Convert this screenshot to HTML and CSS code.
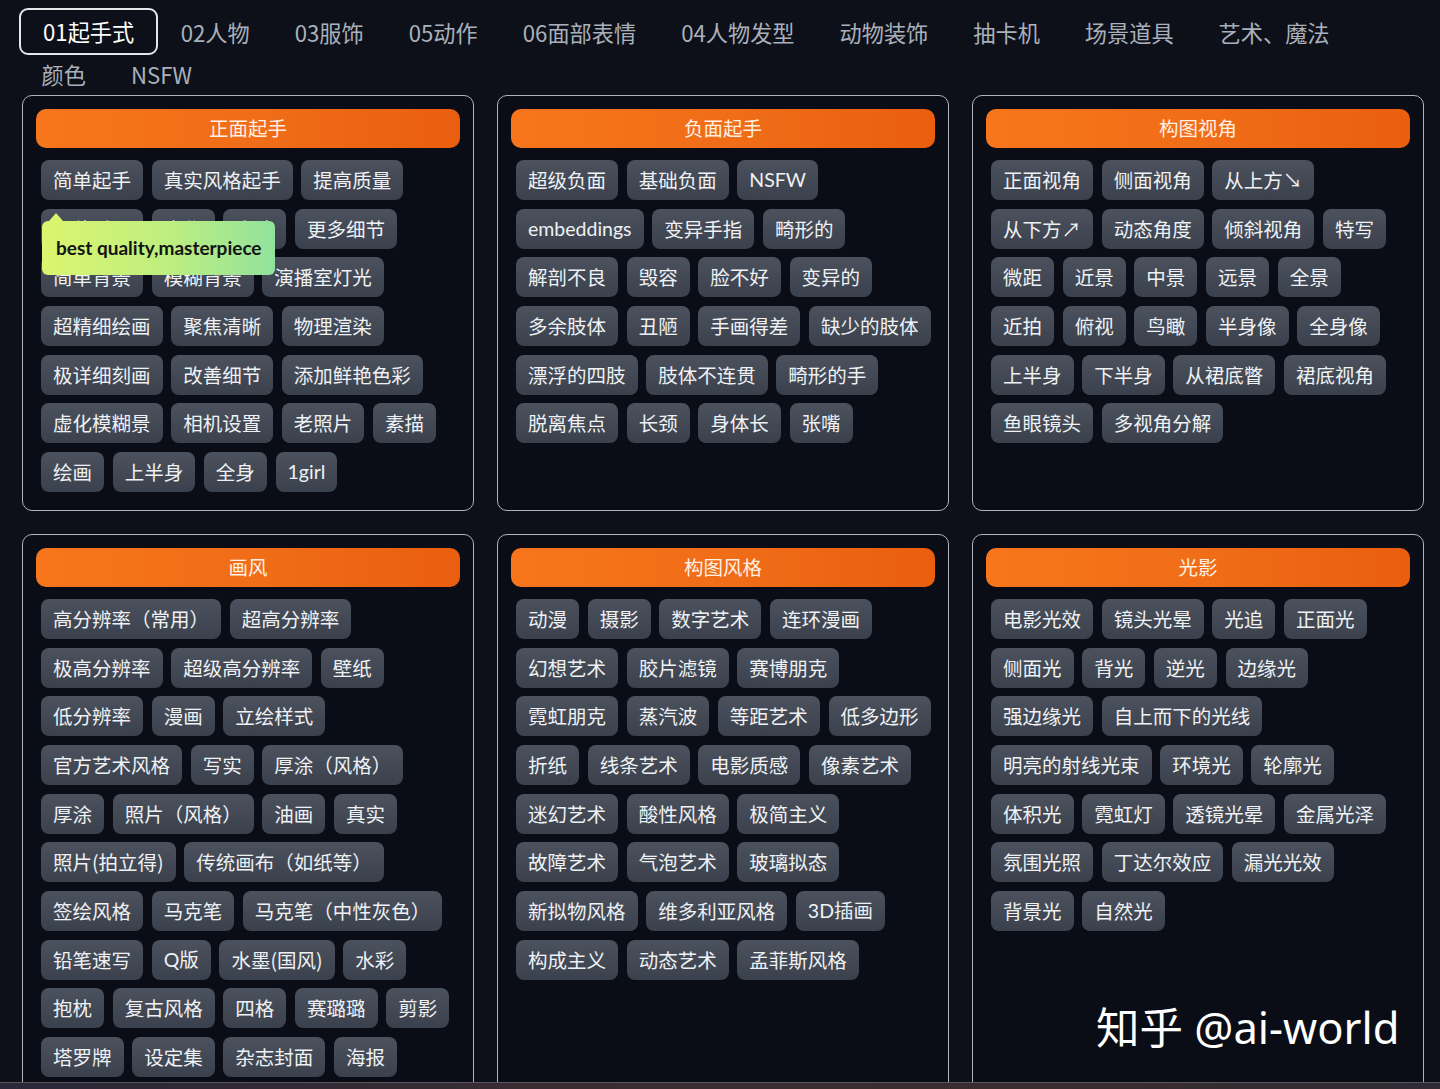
FILE: index.html
```html
<!DOCTYPE html>
<html lang="zh-CN">
<head>
<meta charset="utf-8">
<title>Prompt</title>
<link rel="stylesheet" href="styles.css">
</head>
<body>
<nav class="tabs">
  <button class="tab selected">01起手式</button>
  <button class="tab">02人物</button>
  <button class="tab">03服饰</button>
  <button class="tab">05动作</button>
  <button class="tab">06面部表情</button>
  <button class="tab">04人物发型</button>
  <button class="tab">动物装饰</button>
  <button class="tab">抽卡机</button>
  <button class="tab">场景道具</button>
  <button class="tab">艺术、魔法</button>
  <button class="tab">颜色</button>
  <button class="tab">NSFW</button>
</nav>

<main class="grid">
  <section class="card">
    <div class="head">正面起手</div>
    <div class="chips">
      <span class="chip">简单起手</span><span class="chip">真实风格起手</span><span class="chip">提高质量</span>
      <span class="chip">最佳质量</span><span class="chip">杰作</span><span class="chip">高清</span><span class="chip">更多细节</span>
      <span class="chip">简单背景</span><span class="chip">模糊背景</span><span class="chip">演播室灯光</span>
      <span class="chip">超精细绘画</span><span class="chip">聚焦清晰</span><span class="chip">物理渲染</span>
      <span class="chip">极详细刻画</span><span class="chip">改善细节</span><span class="chip">添加鲜艳色彩</span>
      <span class="chip">虚化模糊景</span><span class="chip">相机设置</span><span class="chip">老照片</span><span class="chip">素描</span>
      <span class="chip">绘画</span><span class="chip">上半身</span><span class="chip">全身</span><span class="chip latin">1girl</span>
    </div>
    <div class="tooltip">best quality,masterpiece</div>
  </section>

  <section class="card">
    <div class="head">负面起手</div>
    <div class="chips">
      <span class="chip">超级负面</span><span class="chip">基础负面</span><span class="chip latin">NSFW</span>
      <span class="chip latin">embeddings</span><span class="chip">变异手指</span><span class="chip">畸形的</span>
      <span class="chip">解剖不良</span><span class="chip">毁容</span><span class="chip">脸不好</span><span class="chip">变异的</span>
      <span class="chip">多余肢体</span><span class="chip">丑陋</span><span class="chip">手画得差</span><span class="chip">缺少的肢体</span>
      <span class="chip">漂浮的四肢</span><span class="chip">肢体不连贯</span><span class="chip">畸形的手</span>
      <span class="chip">脱离焦点</span><span class="chip">长颈</span><span class="chip">身体长</span><span class="chip">张嘴</span>
    </div>
  </section>

  <section class="card">
    <div class="head">构图视角</div>
    <div class="chips">
      <span class="chip">正面视角</span><span class="chip">侧面视角</span><span class="chip">从上方↘</span>
      <span class="chip">从下方↗</span><span class="chip">动态角度</span><span class="chip">倾斜视角</span><span class="chip">特写</span>
      <span class="chip">微距</span><span class="chip">近景</span><span class="chip">中景</span><span class="chip">远景</span><span class="chip">全景</span>
      <span class="chip">近拍</span><span class="chip">俯视</span><span class="chip">鸟瞰</span><span class="chip">半身像</span><span class="chip">全身像</span>
      <span class="chip">上半身</span><span class="chip">下半身</span><span class="chip">从裙底瞥</span><span class="chip">裙底视角</span>
      <span class="chip">鱼眼镜头</span><span class="chip">多视角分解</span>
    </div>
  </section>

  <section class="card">
    <div class="head">画风</div>
    <div class="chips">
      <span class="chip">高分辨率（常用）</span><span class="chip">超高分辨率</span>
      <span class="chip">极高分辨率</span><span class="chip">超级高分辨率</span><span class="chip">壁纸</span>
      <span class="chip">低分辨率</span><span class="chip">漫画</span><span class="chip">立绘样式</span>
      <span class="chip">官方艺术风格</span><span class="chip">写实</span><span class="chip">厚涂（风格）</span>
      <span class="chip">厚涂</span><span class="chip">照片（风格）</span><span class="chip">油画</span><span class="chip">真实</span>
      <span class="chip">照片(拍立得)</span><span class="chip">传统画布（如纸等）</span>
      <span class="chip">签绘风格</span><span class="chip">马克笔</span><span class="chip">马克笔（中性灰色）</span>
      <span class="chip">铅笔速写</span><span class="chip latin">Q版</span><span class="chip">水墨(国风)</span><span class="chip">水彩</span>
      <span class="chip">抱枕</span><span class="chip">复古风格</span><span class="chip">四格</span><span class="chip">赛璐璐</span><span class="chip">剪影</span>
      <span class="chip">塔罗牌</span><span class="chip">设定集</span><span class="chip">杂志封面</span><span class="chip">海报</span>
    </div>
  </section>

  <section class="card">
    <div class="head">构图风格</div>
    <div class="chips">
      <span class="chip">动漫</span><span class="chip">摄影</span><span class="chip">数字艺术</span><span class="chip">连环漫画</span>
      <span class="chip">幻想艺术</span><span class="chip">胶片滤镜</span><span class="chip">赛博朋克</span>
      <span class="chip">霓虹朋克</span><span class="chip">蒸汽波</span><span class="chip">等距艺术</span><span class="chip">低多边形</span>
      <span class="chip">折纸</span><span class="chip">线条艺术</span><span class="chip">电影质感</span><span class="chip">像素艺术</span>
      <span class="chip">迷幻艺术</span><span class="chip">酸性风格</span><span class="chip">极简主义</span>
      <span class="chip">故障艺术</span><span class="chip">气泡艺术</span><span class="chip">玻璃拟态</span>
      <span class="chip">新拟物风格</span><span class="chip">维多利亚风格</span><span class="chip latin">3D插画</span>
      <span class="chip">构成主义</span><span class="chip">动态艺术</span><span class="chip">孟菲斯风格</span>
    </div>
  </section>

  <section class="card">
    <div class="head">光影</div>
    <div class="chips">
      <span class="chip">电影光效</span><span class="chip">镜头光晕</span><span class="chip">光追</span><span class="chip">正面光</span>
      <span class="chip">侧面光</span><span class="chip">背光</span><span class="chip">逆光</span><span class="chip">边缘光</span>
      <span class="chip">强边缘光</span><span class="chip">自上而下的光线</span>
      <span class="chip">明亮的射线光束</span><span class="chip">环境光</span><span class="chip">轮廓光</span>
      <span class="chip">体积光</span><span class="chip">霓虹灯</span><span class="chip">透镜光晕</span><span class="chip">金属光泽</span>
      <span class="chip">氛围光照</span><span class="chip">丁达尔效应</span><span class="chip">漏光光效</span>
      <span class="chip">背景光</span><span class="chip">自然光</span>
    </div>
  </section>
</main>

<div class="watermark">知乎 @ai-world</div>
<div class="bottom-strip"></div>
</body>
</html>
```

FILE: styles.css
```css
* { box-sizing: border-box; }

html, body {
  margin: 0;
  padding: 0;
  background: #0d1019;
  color: #e8eaee;
  font-family: "Noto Sans CJK SC", "Noto Sans", sans-serif;
}

body {
  position: relative;
  min-height: 1089px;
}

.tabs {
  display: flex;
  flex-wrap: wrap;
  margin: 0 16px 0 19px;
  padding-top: 11px;
}

.tab {
  height: 42px;
  padding: 0 20.5px;
  border: 2px solid transparent;
  border-radius: 9px;
  background: transparent;
  color: #a9b0bb;
  font-family: "Noto Sans CJK SC", sans-serif;
  font-size: 22.2px;
  line-height: 36px;
  cursor: pointer;
}

.tab.selected {
  height: 47px;
  margin: -3px 0 -2px;
  padding: 0 22px;
  line-height: 41px;
  border-color: #e4e6ea;
  color: #ffffff;
}

.grid {
  display: grid;
  grid-template-columns: repeat(3, 452px);
  gap: 23px;
  margin: 0 0 0 22px;
}

.card {
  position: relative;
  padding: 13px;
  border: 1px solid #aeb3bc;
  border-radius: 10px;
  background: #0a0d15;
}

.head {
  height: 39px;
  border-radius: 10px;
  background: linear-gradient(90deg, #f7761c 0%, #f06c17 55%, #e95e0f 100%);
  color: #fff0e4;
  font-size: 19.5px;
  line-height: 38px;
  text-align: center;
}

.chips {
  display: flex;
  flex-wrap: wrap;
  gap: 8.67px;
  padding: 12px 2px 5px 5px;
}

.chip {
  display: block;
  height: 40px;
  padding: 0 12px;
  border-radius: 8px;
  background: linear-gradient(180deg, #4b525e 0%, #3a414c 100%);
  color: #eff1f4;
  font-size: 19.5px;
  line-height: 39px;
  white-space: nowrap;
}

.chip.latin {
  font-family: "Lato", "Noto Sans CJK SC", sans-serif;
}

.tooltip {
  position: absolute;
  left: 19px;
  top: 125px;
  width: 233px;
  height: 54px;
  padding: 0 14px;
  border-radius: 6px;
  background: linear-gradient(90deg, #dbf56f 0%, #bdee80 55%, #92e29d 100%);
  color: #141414;
  font-family: "Lato", "Noto Sans CJK SC", sans-serif;
  font-size: 19px;
  font-weight: 700;
  line-height: 54px;
  white-space: nowrap;
}

.tooltip::before {
  content: "";
  position: absolute;
  left: 7px;
  top: -8px;
  border-left: 7px solid transparent;
  border-right: 7px solid transparent;
  border-bottom: 8px solid #dbf56f;
}

.watermark {
  position: absolute;
  left: 1096px;
  top: 1006px;
  color: #ffffff;
  font-family: "Noto Sans", "Noto Sans CJK SC", sans-serif;
  font-size: 43.5px;
  line-height: 43px;
  white-space: nowrap;
}

.bottom-strip {
  position: fixed;
  left: 0;
  right: 0;
  bottom: 0;
  height: 7px;
  border-top: 1px solid #56545c;
  background: linear-gradient(90deg, #2a2838 0%, #3b2d31 45%, #3a2c2e 70%, #2f2b35 100%);
}
```
